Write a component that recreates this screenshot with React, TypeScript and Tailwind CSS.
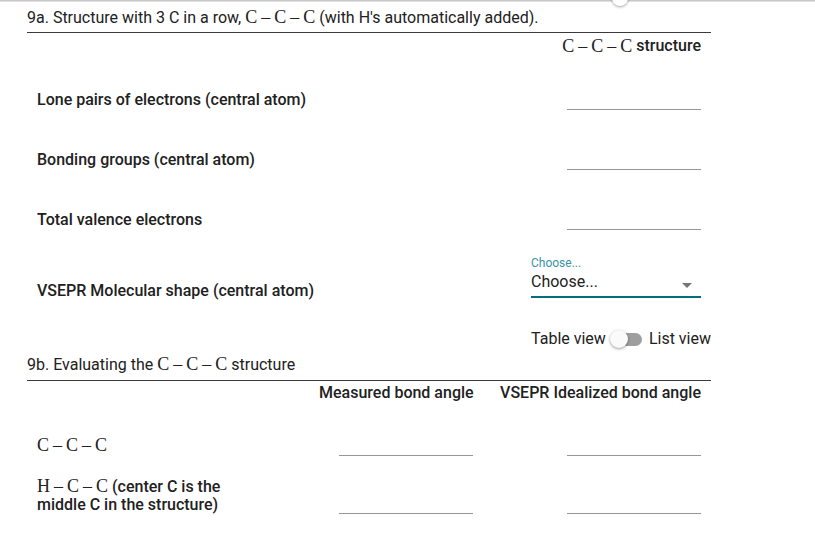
import React from "react";

const Minus = () => <span className="mx-[4px]">–</span>;

function Chain({ atoms }: { atoms: string[] }) {
  return (
    <span className="font-['Liberation_Serif',serif] text-[18px] leading-none font-normal text-[#222]">
      {atoms.map((a, i) => (
        <React.Fragment key={i}>
          {i > 0 && <Minus />}
          {a}
        </React.Fragment>
      ))}
    </span>
  );
}

function Blank() {
  return <div className="ml-auto w-[134px] h-[16px] border-b border-[#979797]" />;
}

function Row({ label }: { label: string }) {
  return (
    <div className="flex items-center h-[60px] pl-[10px] pr-[10px]">
      <div className="flex-1 text-[16px] leading-[20px] font-medium text-[#212121]">{label}</div>
      <div className="w-[134px] translate-y-[2px]">
        <Blank />
      </div>
    </div>
  );
}

export default function App() {
  return (
    <div className="relative w-[815px] h-[543px] bg-white overflow-hidden font-['Roboto','Liberation_Sans',sans-serif] text-[#212121]">
      {/* top edge of previous panel */}
      <div className="h-[2px] bg-gradient-to-b from-[#bdbdbd] to-[#ececec]" />
      <div className="absolute left-[612px] -top-[10px] w-[16px] h-[16px] rounded-full bg-white shadow-[0_1px_3px_rgba(0,0,0,0.35)]" />

      <div className="w-[711px] pl-[27px]">
        {/* 9a */}
        <div className="h-[31px] flex items-end pb-[4px] border-b border-[#3a3a3a] text-[16px] leading-[20px]">
          <span>
            9a. Structure with 3 C in a row, <Chain atoms={["C", "C", "C"]} /> (with H's automatically added).
          </span>
        </div>
        <div className="mt-[4px] pr-[10px] flex justify-end items-center h-[18px] text-[16px] font-medium">
          <Chain atoms={["C", "C", "C"]} />
          <span className="ml-[4px]">structure</span>
        </div>

        <div className="mt-[15px]">
          <Row label="Lone pairs of electrons (central atom)" />
          <Row label="Bonding groups (central atom)" />
          <Row label="Total valence electrons" />
        </div>

        {/* VSEPR select */}
        <div className="flex items-start pl-[10px] pr-[10px]">
          <div className="flex-1 mt-[31px] text-[16px] leading-[20px] font-medium">
            VSEPR Molecular shape (central atom)
          </div>
          <div className="w-[170px] mt-[6px]">
            <div className="text-[12px] leading-[14px] text-[#3a93a6]">Choose...</div>
            <div className="relative h-[28px] border-b-2 border-[#00707f] text-[16px] leading-[24px] text-[#212121]">
              Choose...
              <svg className="absolute right-[9px] top-[13px]" width="10" height="5" viewBox="0 0 10 5">
                <path d="M0 0 L10 0 L5 5 Z" fill="#757575" />
              </svg>
            </div>
          </div>
        </div>

        {/* toggle */}
        <div className="mt-[26px] flex justify-end items-center h-[24px] text-[16px] text-[#212121]">
          <span>Table view</span>
          <div className="relative ml-[4px] mr-[7px] w-[32px] h-[18px] flex items-center">
            <div className="absolute left-[8px] w-[24px] h-[13px] rounded-full bg-[#9e9e9e]" />
            <div className="absolute left-0 w-[18px] h-[18px] rounded-full bg-[#fafafa] shadow-[0_1px_3px_rgba(0,0,0,0.4)]" />
          </div>
          <span>List view</span>
        </div>

        {/* 9b */}
        <div className="h-[30px] flex items-end pb-[5px] border-b border-[#3a3a3a] text-[16px] leading-[20px]">
          <span>
            9b. Evaluating the <Chain atoms={["C", "C", "C"]} /> structure
          </span>
        </div>
        <div className="mt-[2px] flex pr-[10px] text-[16px] leading-[20px] font-medium">
          <div className="flex-1" />
          <div className="w-[154px] text-right whitespace-nowrap">Measured bond angle</div>
          <div className="w-[228px] text-right whitespace-nowrap">VSEPR Idealized bond angle</div>
        </div>

        <div className="mt-[33px] flex items-end pl-[10px] pr-[10px]">
          <div className="flex-1 leading-[20px]">
            <Chain atoms={["C", "C", "C"]} />
          </div>
          <div className="w-[154px]"><Blank /></div>
          <div className="w-[228px]"><Blank /></div>
        </div>

        <div className="mt-[21px] flex items-end pl-[10px] pr-[10px]">
          <div className="flex-1 text-[16px] leading-[18px] font-medium">
            <Chain atoms={["H", "C", "C"]} /> (center C is the
            <br />
            middle C in the structure)
          </div>
          <div className="w-[154px]"><Blank /></div>
          <div className="w-[228px]"><Blank /></div>
        </div>
      </div>
    </div>
  );
}
